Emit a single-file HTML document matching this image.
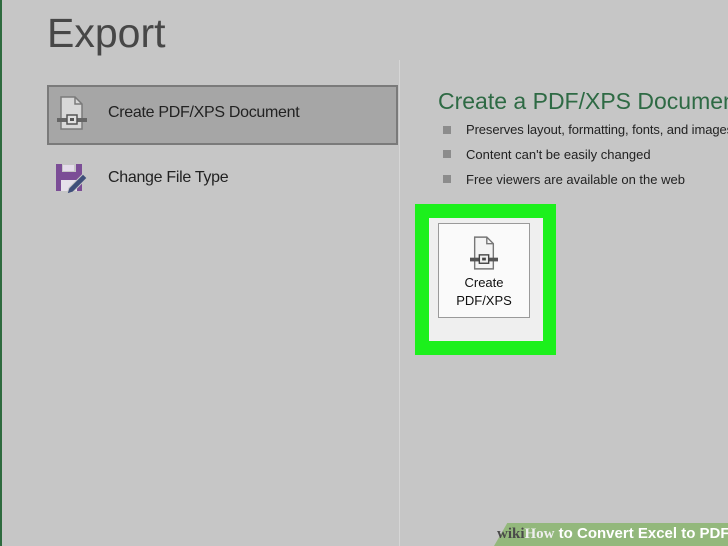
<!DOCTYPE html>
<html><head><meta charset="utf-8"><style>
html,body{margin:0;padding:0}
body{width:728px;height:546px;overflow:hidden;background:#c6c6c6;position:relative;font-family:"Liberation Sans","DejaVu Sans",sans-serif;}
.a{position:absolute}
</style></head><body>
<div class="a" style="left:0;top:0;width:2px;height:546px;background:#2e6b3e"></div>
<div class="a" style="left:47px;top:10px;font-size:41px;color:#474747">Export</div>
<div class="a" style="left:399px;top:60px;width:1px;height:486px;background:#d6d6d6"></div>
<div class="a" style="left:47px;top:85px;width:347px;height:56px;background:#a6a6a6;border:2px solid #7a7a7a"></div>
<svg class="a" style="left:57px;top:96px" width="30" height="36" viewBox="0 0 30 36">
<path d="M4 1h14l7 7v25H4z" fill="#d8d8d8" stroke="#7a7a7a" stroke-width="1.5"/>
<path d="M18 1v7h7" fill="none" stroke="#7a7a7a" stroke-width="1.5"/>
<rect x="0" y="22" width="30" height="4" fill="#666"/>
<rect x="10" y="19" width="10" height="9" fill="#e0e0e0" stroke="#555" stroke-width="1.5"/>
<rect x="13" y="22" width="4" height="3" fill="#555"/></svg>
<div class="a" style="left:108px;top:104px;font-size:16px;letter-spacing:-0.3px;color:#222;white-space:nowrap">Create PDF/XPS Document</div>
<svg class="a" style="left:55px;top:163px" width="36" height="32" viewBox="0 0 36 32">
<rect x="1" y="1" width="26" height="27" fill="#7b4d96"/>
<rect x="7" y="1" width="14" height="8" fill="#c6c6c6"/>
<rect x="8" y="2" width="11" height="6" fill="#e4dcea"/>
<rect x="6" y="17" width="16" height="11" fill="#e6e0ea"/>
<path d="M12 31l2-6 14-14 4 4-14 14z" fill="#3f4f7a" stroke="#c6c6c6" stroke-width="1"/></svg>
<div class="a" style="left:108px;top:169px;font-size:16px;letter-spacing:-0.3px;color:#222">Change File Type</div>
<div class="a" style="left:438px;top:88px;font-size:23px;color:#2e6a44;white-space:nowrap">Create a PDF/XPS Document</div>
<div class="a" style="left:443px;top:126px;width:8px;height:8px;background:#8c8c8c"></div>
<div class="a" style="left:443px;top:150px;width:8px;height:8px;background:#8c8c8c"></div>
<div class="a" style="left:443px;top:175px;width:8px;height:8px;background:#8c8c8c"></div>
<div class="a" style="left:466px;top:122px;font-size:13px;letter-spacing:-0.1px;color:#222;white-space:nowrap">Preserves layout, formatting, fonts, and images</div>
<div class="a" style="left:466px;top:147px;font-size:13px;color:#222">Content can't be easily changed</div>
<div class="a" style="left:466px;top:172px;font-size:13px;color:#222">Free viewers are available on the web</div>
<div class="a" style="left:415px;top:204px;width:141px;height:151px;background:#1cf01c"></div>
<div class="a" style="left:429px;top:218px;width:114px;height:123px;background:#efefef"></div>
<div class="a" style="left:438px;top:223px;width:90px;height:93px;background:#fafafa;border:1px solid #9a9a9a"></div>
<svg class="a" style="left:470px;top:236px" width="28" height="34" viewBox="0 0 30 36">
<path d="M5 1h13l7 7v27H5z" fill="#f4f4f4" stroke="#777" stroke-width="1.5"/>
<path d="M18 1v7h7" fill="none" stroke="#777" stroke-width="1.5"/>
<rect x="0" y="23" width="30" height="4" fill="#555"/>
<rect x="10" y="20" width="10" height="9" fill="#eee" stroke="#444" stroke-width="1.5"/>
<rect x="13" y="23" width="4" height="3" fill="#444"/></svg>
<div class="a" style="left:438px;top:274px;width:92px;text-align:center;font-size:13px;line-height:18px;color:#111">Create<br>PDF/XPS</div>
<div class="a" style="left:494px;top:523px;width:240px;height:23px;background:#93b87c;transform:skewX(-30deg);transform-origin:bottom left"></div>
<div class="a" style="left:497px;top:525px;font-size:15px;font-weight:bold;color:#fff;white-space:nowrap"><span style="font-family:'Liberation Serif',serif;color:#4a4a4a">wiki</span><span style="font-family:'Liberation Serif',serif;color:#eee">How</span> to Convert Excel to PDF</div>
</body></html>
